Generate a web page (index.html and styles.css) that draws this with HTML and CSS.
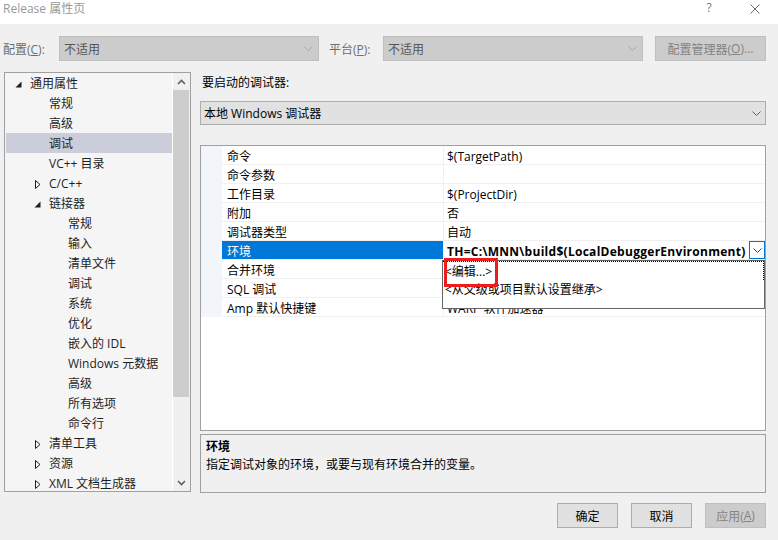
FILE: index.html
```html
<!DOCTYPE html>
<html lang="zh-CN">
<head>
  <meta charset="UTF-8">
  <title>Release 属性页</title>
  <link rel="stylesheet" href="styles.css">
</head>
<body>
  <div class="titlebar">
    <span class="title">Release 属性页</span>
    <span class="help">?</span>
    <span class="close">
      <svg width="10" height="10" viewBox="0 0 10 10"><path d="M0.5 0.5L9.5 9.5M9.5 0.5L0.5 9.5" stroke="#6a6a6a" stroke-width="1" fill="none"/></svg>
    </span>
  </div>

  <div class="toolbar">
    <span class="lbl lbl-config">配置(<u>C</u>):</span>
    <div class="select disabled">
      <span>不适用</span>
      <svg width="9" height="5" viewBox="0 0 9 5"><path d="M0.5 0.5L4.5 4.5L8.5 0.5" stroke="#a8a8a8" fill="none"/></svg>
    </div>
    <span class="lbl lbl-platform">平台(<u>P</u>):</span>
    <div class="select disabled">
      <span>不适用</span>
      <svg width="9" height="5" viewBox="0 0 9 5"><path d="M0.5 0.5L4.5 4.5L8.5 0.5" stroke="#a8a8a8" fill="none"/></svg>
    </div>
    <div class="btn disabled manager">配置管理器(<u>O</u>)...</div>
  </div>

  <div class="main">
    <div class="tree">
      <ul class="tree-list">
        <li class="lv0"><span class="arrow"><svg width="7" height="7" viewBox="0 0 7 7"><path d="M6.5 0.5V6.5H0.5Z" fill="#1e1e1e"/></svg></span>通用属性</li>
        <li class="lv1"><span class="arrow"></span>常规</li>
        <li class="lv1"><span class="arrow"></span>高级</li>
        <li class="lv1 sel"><span class="arrow"></span>调试</li>
        <li class="lv1"><span class="arrow"></span>VC++ 目录</li>
        <li class="lv1"><span class="arrow"><svg class="closed" width="6" height="9" viewBox="0 0 6 9"><path d="M0.5 0.5L5 4.5L0.5 8.5Z" stroke="#1e1e1e" fill="none"/></svg></span>C/C++</li>
        <li class="lv1"><span class="arrow"><svg width="7" height="7" viewBox="0 0 7 7"><path d="M6.5 0.5V6.5H0.5Z" fill="#1e1e1e"/></svg></span>链接器</li>
        <li class="lv2"><span class="arrow"></span>常规</li>
        <li class="lv2"><span class="arrow"></span>输入</li>
        <li class="lv2"><span class="arrow"></span>清单文件</li>
        <li class="lv2"><span class="arrow"></span>调试</li>
        <li class="lv2"><span class="arrow"></span>系统</li>
        <li class="lv2"><span class="arrow"></span>优化</li>
        <li class="lv2"><span class="arrow"></span>嵌入的 IDL</li>
        <li class="lv2"><span class="arrow"></span>Windows 元数据</li>
        <li class="lv2"><span class="arrow"></span>高级</li>
        <li class="lv2"><span class="arrow"></span>所有选项</li>
        <li class="lv2"><span class="arrow"></span>命令行</li>
        <li class="lv1"><span class="arrow"><svg class="closed" width="6" height="9" viewBox="0 0 6 9"><path d="M0.5 0.5L5 4.5L0.5 8.5Z" stroke="#1e1e1e" fill="none"/></svg></span>清单工具</li>
        <li class="lv1"><span class="arrow"><svg class="closed" width="6" height="9" viewBox="0 0 6 9"><path d="M0.5 0.5L5 4.5L0.5 8.5Z" stroke="#1e1e1e" fill="none"/></svg></span>资源</li>
        <li class="lv1"><span class="arrow"><svg class="closed" width="6" height="9" viewBox="0 0 6 9"><path d="M0.5 0.5L5 4.5L0.5 8.5Z" stroke="#1e1e1e" fill="none"/></svg></span>XML 文档生成器</li>
      </ul>
      <div class="vscroll">
        <div class="sbtn"><svg width="9" height="6" viewBox="0 0 9 6"><path d="M1 5L4.5 1.5L8 5" stroke="#606060" stroke-width="1.6" fill="none"/></svg></div>
        <div class="thumb"></div>
        <div class="track"></div>
        <div class="sbtn"><svg width="9" height="6" viewBox="0 0 9 6"><path d="M1 1L4.5 4.5L8 1" stroke="#606060" stroke-width="1.6" fill="none"/></svg></div>
      </div>
    </div>

    <div class="panel">
      <div class="panel-label">要启动的调试器:</div>
      <div class="select combo">
        <span>本地 Windows 调试器</span>
        <svg width="9" height="5" viewBox="0 0 9 5"><path d="M0.5 0.5L4.5 4.5L8.5 0.5" stroke="#606060" fill="none"/></svg>
      </div>

      <div class="grid">
        <div class="row"><div class="gutter"></div><div class="name">命令</div><div class="value">$(TargetPath)</div></div>
        <div class="row"><div class="gutter"></div><div class="name">命令参数</div><div class="value"></div></div>
        <div class="row"><div class="gutter"></div><div class="name">工作目录</div><div class="value">$(ProjectDir)</div></div>
        <div class="row"><div class="gutter"></div><div class="name">附加</div><div class="value">否</div></div>
        <div class="row"><div class="gutter"></div><div class="name">调试器类型</div><div class="value">自动</div></div>
        <div class="row active">
          <div class="gutter"></div>
          <div class="name">环境</div>
          <div class="value edit">
            <span class="edit-text">TH=C:\MNN\build$(LocalDebuggerEnvironment)</span>
            <span class="drop-btn"><svg width="9" height="5" viewBox="0 0 9 5"><path d="M0.5 0.5L4.5 4.5L8.5 0.5" stroke="#404040" fill="none"/></svg></span>
          </div>
        </div>
        <div class="row"><div class="gutter"></div><div class="name">合并环境</div><div class="value"></div></div>
        <div class="row"><div class="gutter"></div><div class="name">SQL 调试</div><div class="value"></div></div>
        <div class="row"><div class="gutter"></div><div class="name">Amp 默认快捷键</div><div class="value">WARP 软件加速器</div></div>

        <div class="popup">
          <div class="popup-item focus">&lt;编辑...&gt;</div>
          <div class="popup-item">&lt;从父级或项目默认设置继承&gt;</div>
        </div>
        <div class="mark"></div>
      </div>

      <div class="desc">
        <div class="desc-title">环境</div>
        <div>指定调试对象的环境，或要与现有环境合并的变量。</div>
      </div>
    </div>
  </div>

  <div class="footer">
    <div class="btn">确定</div>
    <div class="btn">取消</div>
    <div class="btn disabled">应用(<u>A</u>)</div>
  </div>
</body>
</html>
```

FILE: styles.css
```css
* {
  box-sizing: border-box;
}
body {
  margin: 0;
  width: 778px;
  height: 540px;
  overflow: hidden;
  background-color: #f0f0f0;
  font-family: "Open Sans", "Noto Sans CJK SC", sans-serif;
  font-size: 12px;
  color: #000;
}
u {
  text-decoration: underline;
  text-underline-offset: 1px;
}

/* title bar */
.titlebar {
  height: 24px;
  background-color: #fff;
  display: flex;
  align-items: flex-start;
  padding-left: 3px;
  color: #999;
}
.title {
  flex: 1;
  line-height: 16px;
  padding-top: 1px;
}
.help {
  width: 46px;
  text-align: center;
  line-height: 16px;
  color: #777;
}
.close {
  width: 46px;
  display: flex;
  justify-content: center;
  padding-top: 4px;
}

/* config row */
.toolbar {
  display: flex;
  align-items: center;
  height: 25px;
  margin-top: 12px;
  padding-left: 3px;
}
.lbl {
  color: #6d6d6d;
  white-space: nowrap;
}
.lbl-config {
  width: 56px;
}
.lbl-platform {
  width: 54px;
  margin-left: 10px;
}
.select {
  display: flex;
  align-items: center;
  justify-content: space-between;
  width: 260px;
  height: 25px;
  padding: 0 5px 0 4px;
  border: 1px solid #bfbfbf;
  background-color: #cccccc;
  color: #555;
}
.btn {
  display: flex;
  align-items: center;
  justify-content: center;
  width: 61px;
  height: 25px;
  border: 1px solid #adadad;
  background-color: #e1e1e1;
  white-space: nowrap;
}
.btn.disabled {
  border-color: #bfbfbf;
  background-color: #cccccc;
  color: #838383;
}
.manager {
  width: 111px;
  margin-left: 12px;
}

/* main area */
.main {
  display: flex;
  gap: 9px;
  margin-top: 11px;
  padding-left: 4px;
}
.tree {
  display: flex;
  width: 187px;
  height: 420px;
  border: 1px solid #a0a0a0;
  background-color: #f5f5f5;
  overflow: hidden;
}
.tree-list {
  flex: 1;
  margin: 0;
  padding: 0 0 0 1px;
  list-style: none;
  color: #1e1e1e;
}
.tree-list li {
  display: flex;
  align-items: center;
  height: 20px;
  padding-top: 1px;
  line-height: 19px;
  white-space: nowrap;
}
.tree-list li.lv0 { padding-left: 5px; }
.tree-list li.lv1 { padding-left: 24px; }
.tree-list li.lv2 { padding-left: 43px; }
.tree-list li.sel {
  background-color: #cbcdda;
}
.arrow {
  display: flex;
  align-items: center;
  width: 19px;
  height: 19px;
  padding-left: 4px;
  padding-top: 1px;
}
.arrow .closed {
  margin-left: 1px;
}
.vscroll {
  display: flex;
  flex-direction: column;
  width: 18px;
  border-left: 1px solid #fff;
  background-color: #f0f0f0;
}
.sbtn {
  display: flex;
  align-items: center;
  justify-content: center;
  height: 17px;
}
.thumb {
  height: 307px;
  margin-right: 1px;
  background-color: #cdcdcd;
}
.track {
  flex: 1;
}

/* right panel */
.panel {
  display: flex;
  flex-direction: column;
  width: 566px;
}
.panel-label {
  height: 29px;
  padding: 1px 0 0 2px;
  line-height: 20px;
}
.combo {
  width: 566px;
  height: 24px;
  padding: 0 4px 0 3px;
  border-color: #adadad;
  background-color: #e1e1e1;
  color: #000;
}
.grid {
  position: relative;
  height: 286px;
  margin-top: 20px;
  border: 1px solid #a0a0a0;
  background-color: #fff;
  overflow: hidden;
}
.row {
  display: flex;
  height: 19px;
  white-space: nowrap;
}
.gutter {
  width: 21px;
  background-color: #f2f6fb;
}
.name {
  width: 221px;
  padding: 3px 0 0 5px;
  line-height: 15px;
  border-bottom: 1px solid #f0f0f0;
}
.value {
  flex: 1;
  padding: 3px 0 0 3px;
  line-height: 15px;
  border-left: 1px solid #f0f0f0;
  border-bottom: 1px solid #f0f0f0;
}
.row.active .name {
  background-color: #0078d7;
  color: #fff;
}
.value.edit {
  display: flex;
  padding: 0 0 0 3px;
  font-weight: bold;
  letter-spacing: 0.28px;
  overflow: hidden;
}
.edit-text {
  flex: 1;
  padding-top: 3px;
  overflow: hidden;
}
.drop-btn {
  display: flex;
  align-items: center;
  justify-content: center;
  width: 16px;
  height: 18px;
  border: 1px solid #0078d7;
  background-color: #fff;
}

/* dropdown opened over the grid */
.popup {
  position: absolute;
  left: 241px;
  top: 114px;
  width: 323px;
  height: 49px;
  border: 1px solid #646464;
  background-color: #fff;
}
.popup-item {
  height: 19px;
  padding: 1px 0 0 2px;
  line-height: 18px;
  white-space: nowrap;
}
.popup-item.focus {
  border-top: 1px dotted #000;
  border-right: 1px dotted #000;
  padding-top: 1px;
  line-height: 17px;
}
.mark {
  position: absolute;
  left: 243px;
  top: 112px;
  width: 54px;
  height: 29px;
  border: 3px solid #ee1c1c;
}

.desc {
  height: 59px;
  margin-top: 3px;
  padding: 3px 5px 0;
  border: 1px solid #a0a0a0;
  line-height: 18px;
}
.desc-title {
  font-weight: bold;
}

.footer {
  display: flex;
  justify-content: flex-end;
  gap: 13px;
  margin-top: 10px;
  padding-right: 12px;
}
```
